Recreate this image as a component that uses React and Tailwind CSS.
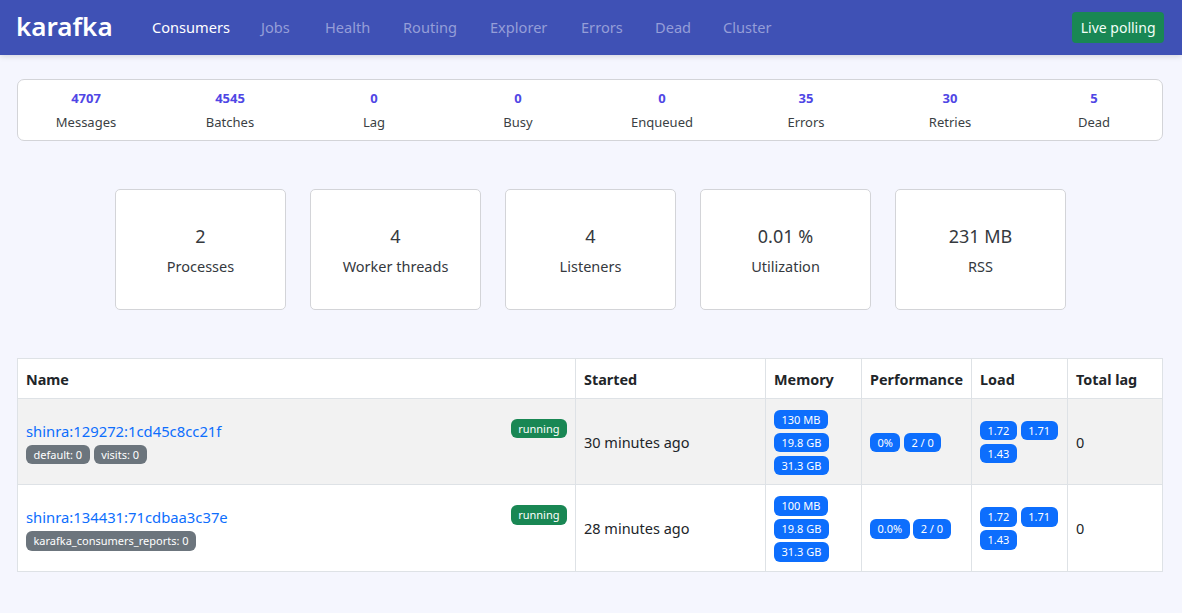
import React from 'react';

const navLinks = ['Consumers', 'Jobs', 'Health', 'Routing', 'Explorer', 'Errors', 'Dead', 'Cluster'];

const counters = [
  ['4707', 'Messages'],
  ['4545', 'Batches'],
  ['0', 'Lag'],
  ['0', 'Busy'],
  ['0', 'Enqueued'],
  ['35', 'Errors'],
  ['30', 'Retries'],
  ['5', 'Dead'],
];

const kpis = [
  ['2', 'Processes'],
  ['4', 'Worker threads'],
  ['4', 'Listeners'],
  ['0.01 %', 'Utilization'],
  ['231 MB', 'RSS'],
];

const processes = [
  {
    name: 'shinra:129272:1cd45c8cc21f',
    tags: ['default: 0', 'visits: 0'],
    started: '30 minutes ago',
    memory: ['130 MB', '19.8 GB', '31.3 GB'],
    performance: ['0%', '2 / 0'],
    striped: true,
  },
  {
    name: 'shinra:134431:71cdbaa3c37e',
    tags: ['karafka_consumers_reports: 0'],
    started: '28 minutes ago',
    memory: ['100 MB', '19.8 GB', '31.3 GB'],
    performance: ['0.0%', '2 / 0'],
    striped: false,
  },
];

const load = ['1.72', '1.71', '1.43'];

function Badge({ children, color = 'bg-[#0d6efd]' }) {
  return (
    <span className={`inline-block ${color} text-white text-[11px] leading-[19.5px] h-[19.5px] px-[7.5px] rounded-[6px] whitespace-nowrap`}>
      {children}
    </span>
  );
}

export default function App() {
  return (
    <div className="min-h-[613px] bg-[#f5f6fe] text-[#212529] font-['Noto_Sans',sans-serif] text-[14.5px]">
      {/* Navbar */}
      <nav className="h-[55px] bg-[#3f51b5] shadow-[0_1px_6px_rgba(0,0,0,0.15)] flex items-center pl-[16px] pr-[18px]">
        <span className="text-white text-[26px] font-semibold leading-none w-[136px] -mt-[3px]">karafka</span>
        <ul className="flex-1 grid grid-cols-[109px_64px_78px_87px_91px_74px_68px_auto] text-[14.6px]">
          {navLinks.map((link, i) => (
            <li key={link} className={i === 0 ? 'text-white' : 'text-[#959ed8]'}>
              {link}
            </li>
          ))}
        </ul>
        <button className="bg-[#198754] text-[#f3fff8] text-[14px] h-[31px] px-[8.5px] rounded-[4px]">Live polling</button>
      </nav>

      <main className="pl-[17px] pr-[19px] pt-[24px]">
        {/* Counters */}
        <div className="h-[62px] bg-white border border-[#d3d4d8] rounded-[7px]">
          <div className="-mx-[4px] grid grid-cols-8 pt-[9px]">
            {counters.map(([value, label]) => (
              <div key={label} className="text-center">
                <div className="text-[13px] leading-[18px] font-bold text-[#4f46e5]">{value}</div>
                <div className="text-[13px] leading-[18px] mt-[6px] text-[#3b3f44]">{label}</div>
              </div>
            ))}
          </div>
        </div>

        {/* KPIs */}
        <div className="flex justify-center gap-[24px] mt-[48px] pl-[1px]">
          {kpis.map(([value, label]) => (
            <div key={label} className="w-[171px] h-[121px] bg-white border border-[#d3d4d8] rounded-[5px] flex flex-col items-center pt-[34px]">
              <div className="text-[18px] leading-[24px] text-[#35393e]">{value}</div>
              <div className="text-[14.5px] leading-[20px] mt-[8px] text-[#35393e]">{label}</div>
            </div>
          ))}
        </div>

        {/* Processes */}
        <table className="mt-[48px] w-[1145px] table-fixed border-collapse bg-white border border-[#dee2e6]">
          <colgroup>
            <col className="w-[558px]" />
            <col className="w-[190px]" />
            <col className="w-[96px]" />
            <col className="w-[110px]" />
            <col className="w-[96px]" />
            <col className="w-[95px]" />
          </colgroup>
          <thead>
            <tr className="h-[40px]">
              {['Name', 'Started', 'Memory', 'Performance', 'Load', 'Total lag'].map((h) => (
                <th key={h} className="border border-[#dee2e6] px-[8px] pt-[2px] text-left text-[14.4px] font-bold">{h}</th>
              ))}
            </tr>
          </thead>
          <tbody>
            {processes.map((p) => (
              <tr key={p.name} className={p.striped ? 'h-[86px] bg-[#f2f2f2]' : 'h-[87px] bg-white'}>
                <td className="border border-[#dee2e6] px-[8px] pb-[2px]">
                  <div className="flex justify-between">
                    <div>
                      <a className="block text-[#0d6efd] text-[14.8px] leading-[22px] mt-[3px]">{p.name}</a>
                      <div className="flex gap-[4px] mt-[3px]">
                        {p.tags.map((t) => (
                          <Badge key={t} color="bg-[#6c757d]">{t}</Badge>
                        ))}
                      </div>
                    </div>
                    <div>
                      <Badge color="bg-[#198754]">running</Badge>
                    </div>
                  </div>
                </td>
                <td className="border border-[#dee2e6] px-[8px] pt-[2px]">{p.started}</td>
                <td className="border border-[#dee2e6] px-[8px] pt-[2px]">
                  <div className="flex flex-col items-start gap-[3.5px]">
                    {p.memory.map((m) => (
                      <Badge key={m}>{m}</Badge>
                    ))}
                  </div>
                </td>
                <td className="border border-[#dee2e6] px-[8px] pt-[2px]">
                  <div className="flex gap-[3.5px]">
                    {p.performance.map((m) => (
                      <Badge key={m}>{m}</Badge>
                    ))}
                  </div>
                </td>
                <td className="border border-[#dee2e6] pl-[8px] pr-0 pt-[1px]">
                  <div className="flex flex-wrap gap-x-[4px] gap-y-[3.5px]">
                    {load.map((m) => (
                      <Badge key={m}>{m}</Badge>
                    ))}
                  </div>
                </td>
                <td className="border border-[#dee2e6] px-[8px] pt-[2px]">0</td>
              </tr>
            ))}
          </tbody>
        </table>
      </main>
    </div>
  );
}
